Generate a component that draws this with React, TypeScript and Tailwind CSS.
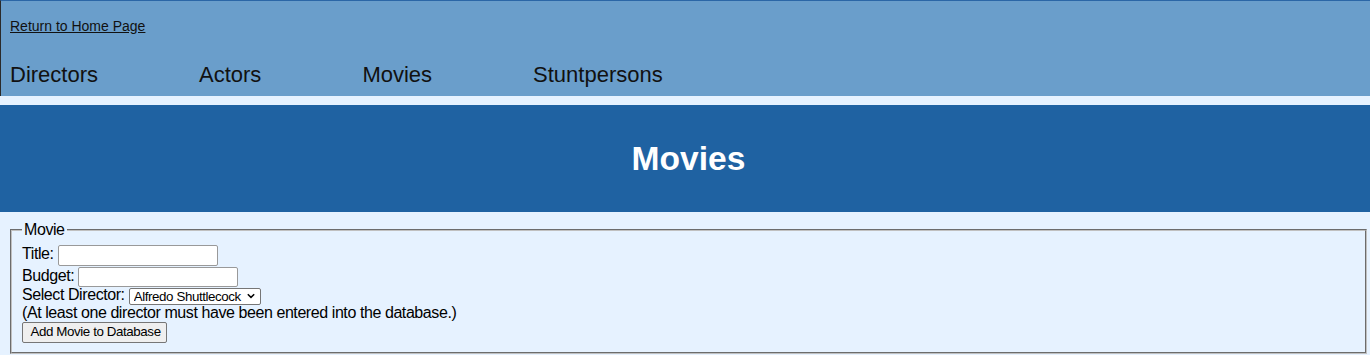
import React from "react";

export default function App() {
  const font = { fontFamily: '"Liberation Sans", Arial, sans-serif' };
  return (
    <div className="min-h-[355px] w-[1370px] bg-[#e6f2ff] text-black overflow-hidden" style={font}>
      <header className="h-[96px] bg-[#6a9ecb] border-t border-t-[#2b66a6] border-l border-l-[#2a2a2a] pl-[9px] flex flex-col">
        <div className="mt-[17px] h-[17px] leading-[17px] text-[14px]">
          <a href="#" className="underline text-[#111]">Return to Home Page</a>
        </div>
        <nav className="mt-[27px] flex gap-[101px] text-[22px] leading-[25px] text-[#111]">
          <a href="#">Directors</a>
          <a href="#">Actors</a>
          <a href="#">Movies</a>
          <a href="#">Stuntpersons</a>
        </nav>
      </header>
      <div className="mt-[9px] h-[107px] bg-[#1f62a2] flex items-center justify-center pl-[7px]">
        <h1 className="text-white font-bold text-[33.6px] leading-[39px]">Movies</h1>
      </div>
      <fieldset className="mt-[9px] ml-[10px] mr-[3px] border-2 [border-style:groove] border-[#c0c0c0] pl-[10px] pr-[10px] pt-[5.5px] pb-[9px] text-[16px] tracking-[-0.42px]">
        <legend className="px-[2px] leading-[18.4px]">Movie</legend>
        <div className="flex items-start h-[22px] gap-[4px]">
          <span className="leading-[18.4px] mt-[0.5px]">Title:</span>
          <input type="text" aria-label="Title" className="w-[160px] h-[21.4px] bg-white border border-[#999] rounded-[2px] text-[13.33px] px-[2px]" />
        </div>
        <div className="flex items-start h-[19.5px] gap-[4px]">
          <span className="leading-[18.4px] mt-[0.5px]">Budget:</span>
          <input type="text" aria-label="Budget" className="w-[160px] h-[20px] bg-white border border-[#999] rounded-[2px] text-[13.33px] px-[2px]" />
        </div>
        <div className="flex items-start h-[17.5px] gap-[4px]">
          <span className="leading-[18.4px]">Select Director:</span>
          <span className="mt-[1.3px] inline-flex items-center h-[17.5px] w-[132px] bg-white border border-[#767676] rounded-[2px] pl-[4px] pr-[5px] tracking-[-0.4px]">
            <select aria-label="Select Director" className="appearance-none flex-1 min-w-0 text-[13.33px] leading-[15px] bg-transparent outline-none">
              <option>Alfredo Shuttlecock</option>
            </select>
            <svg width="8" height="6" viewBox="0 0 8 6" className="shrink-0">
              <path d="M0.8 1.2 L4 4.4 L7.2 1.2" fill="none" stroke="#000" strokeWidth="1.5" />
            </svg>
          </span>
        </div>
        <div className="leading-[18.4px]">(At least one director must have been entered into the database.)</div>
        <button className="h-[20.3px] w-[144.5px] flex items-center pl-[7.5px] bg-[#efefef] border border-[#767676] rounded-[2px] text-[13.33px] leading-[16px] tracking-[-0.4px]">
          Add Movie to Database
        </button>
      </fieldset>
    </div>
  );
}
